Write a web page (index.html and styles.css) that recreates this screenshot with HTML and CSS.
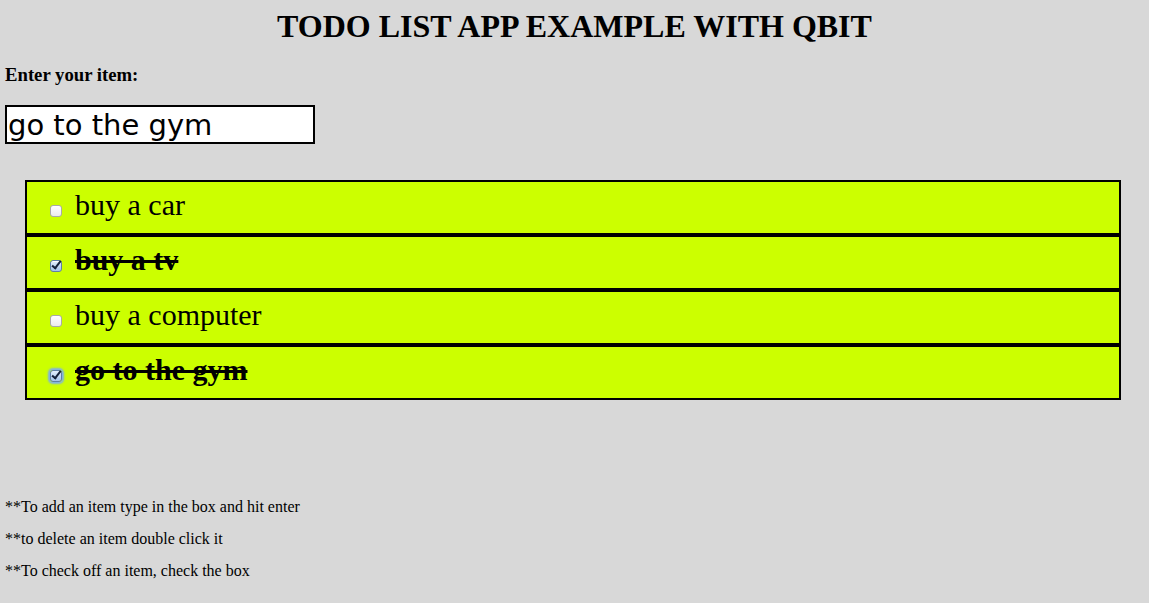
FILE: index.html
```html
<!DOCTYPE html>
<html lang="en">
<head>
<meta charset="utf-8">
<title>Todo list app example with qbit</title>
<link rel="stylesheet" href="styles.css">
</head>
<body>
<h1 class="title">TODO LIST APP EXAMPLE WITH QBIT</h1>
<h3 class="label">Enter your item:</h3>
<input class="entry" type="text" value="go to the gym">
<ul class="todos">
<li class="todo"><input type="checkbox" class="check"><span class="text">buy a car</span></li>
<li class="todo done"><input type="checkbox" class="check" checked><span class="text">buy a tv</span></li>
<li class="todo"><input type="checkbox" class="check"><span class="text">buy a computer</span></li>
<li class="todo done"><input type="checkbox" class="check focus" checked><span class="text">go to the gym</span></li>
</ul>
<div class="help">
<p class="hint">**To add an item type in the box and hit enter</p>
<p class="hint">**to delete an item double click it</p>
<p class="hint">**To check off an item, check the box</p>
</div>
</body>
</html>
```
FILE: styles.css
```css
html, body {
  background: #d8d8d8;
}
body {
  margin: 0;
  padding: 0 5px;
  font-family: "Liberation Serif", "Times New Roman", serif;
  color: #000;
}
.title {
  font-size: 32px;
  line-height: 37px;
  font-weight: bold;
  text-align: center;
  margin: 8px 0 0;
}
.label {
  font-size: 18.72px;
  line-height: 22px;
  font-weight: bold;
  margin: 19px 0 0;
}
.entry {
  display: block;
  box-sizing: border-box;
  margin: 19px 0 0;
  width: 310px;
  height: 39px;
  border: 2px solid #000;
  padding: 0 1px;
  background: #fff;
  font-family: "DejaVu Sans", "Liberation Sans", sans-serif;
  font-size: 29px;
  color: #000;
  outline: none;
}
.todos {
  list-style: none;
  margin: 36px 23px 0 20px;
  padding: 0;
}
.todo {
  background: #ccff00;
  border: 2px solid #000;
  height: 45px;
  padding: 6px 0 0 23px;
  font-size: 30px;
  line-height: 33px;
}
.check {
  appearance: none;
  -webkit-appearance: none;
  position: relative;
  box-sizing: border-box;
  width: 12px;
  height: 12px;
  margin: 0 13px 0 0;
  vertical-align: -2px;
  border: 1px solid #a9a9a9;
  border-radius: 3px;
  background: linear-gradient(#ffffff, #ececec);
  box-shadow: inset 0 1px 0 #fff;
}
.check:checked {
  border-color: #5f7fa6;
  background: linear-gradient(#e2eefb, #a4c4ea);
}
.check:checked::before {
  content: "";
  position: absolute;
  left: 3px;
  top: -2px;
  width: 3px;
  height: 8px;
  border-right: 2.5px solid #14213a;
  border-bottom: 2.5px solid #14213a;
  transform: rotate(38deg);
}
.check.focus {
  box-shadow: 0 0 2px 2px #7fb0e6;
}
.done .text {
  font-weight: bold;
  text-decoration: line-through;
}
.help {
  margin-top: 98px;
}
.hint {
  margin: 0 0 14px;
  font-size: 16px;
  line-height: 18px;
}
```
